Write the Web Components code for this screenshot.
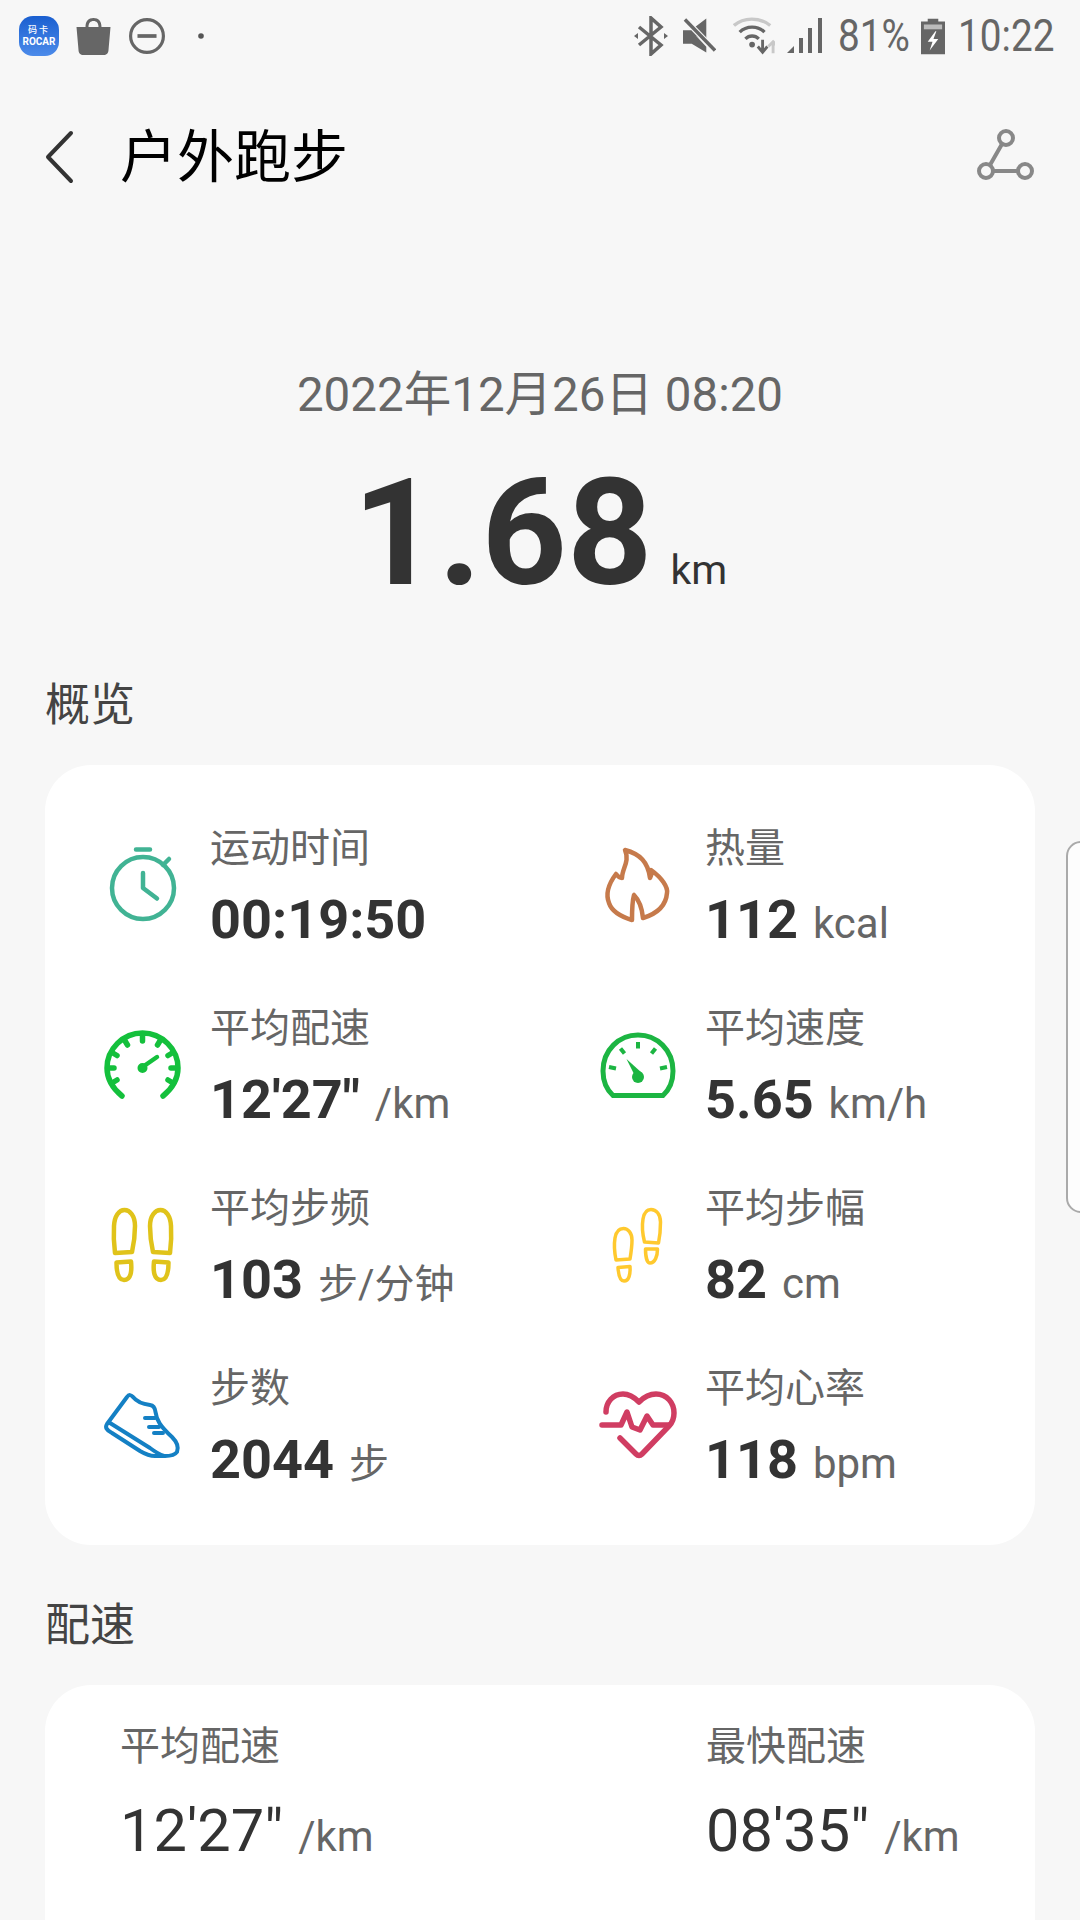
<!DOCTYPE html>
<html lang="zh">
<head>
<meta charset="utf-8">
<title>户外跑步</title>
<style>
  html, body { margin: 0; background: #f7f7f7; }
  body {
    width: 1080px;
    height: 1920px;
    overflow: hidden;
    position: relative;
    font-family: Roboto, "Noto Sans CJK SC", sans-serif;
  }
</style>
</head>
<body>
<status-bar></status-bar>
<app-header title="户外跑步"></app-header>
<run-summary date="2022年12月26日 08:20" distance="1.68" unit="km"></run-summary>

<section-title>概览</section-title>
<metric-card>
  <metric-item label="运动时间" value="00:19:50">
    <svg slot="icon" viewBox="101 846 84 84" fill="none" stroke="#41b394" stroke-width="4.5" stroke-linecap="round" stroke-linejoin="round">
      <circle cx="143" cy="888" r="31"/>
      <path d="M136 849.500h14M163 865l6-6M143 873v15l14 10.500"/>
    </svg>
  </metric-item>
  <metric-item label="热量" value="112" unit="kcal">
    <svg slot="icon" viewBox="595 846 84 84" fill="none" stroke="#c67a4b" stroke-width="4.500" stroke-linejoin="round">
      <path d="M625 850C640 854 648 862 650 878C652 874 652 872 651 870C662 878 668 887 667 893C666 906 656 914 643 918C642 908 639 900 634 895C632 902 632 912 632 920C622 917 612 912 609 903C605 893 610 882 616 874C619 878 621 878 622 878C622 868 630 862 625 850Z"/>
    </svg>
  </metric-item>
  <metric-item label="平均配速" value="12'27&quot;" unit="/km">
    <svg slot="icon" viewBox="101 1026 84 84" fill="none" stroke="#14c03c" stroke-width="5.500" stroke-linecap="round" stroke-linejoin="round">
      <path d="M122 1096C111 1087 107 1078 107 1068C107 1049 123 1033 142.500 1033C162 1033 178 1049 178 1068C178 1078 174 1087 163 1096"/>
      <path d="M142.500 1035v6M124.500 1040l3 5M112 1052.500l5 3M108 1068h6M177 1068h-6M173 1052.500l-5 3M160.500 1040l-3 5M112 1083l5-3M173 1083l-5-3"/>
      <path d="M144 1066l13-9" stroke-width="4.500"/>
      <circle cx="142.500" cy="1068" r="4" fill="#14c03c" stroke-width="2"/>
    </svg>
  </metric-item>
  <metric-item label="平均速度" value="5.65" unit="km/h">
    <svg slot="icon" viewBox="595 1026 84 84" fill="none" stroke="#1cb542" stroke-width="5">
      <path d="M613 1095.500C606 1089 603 1080 603 1071C603 1050 619 1035 638 1035C657 1035 673 1050 673 1071C673 1080 670 1089 663 1095.500Z"/>
      <path d="M638 1042v6.500M620.500 1048.500l4 5M609 1067l7 1.500M667 1067l-7 1.500M655.500 1048.500l-4 5" stroke-width="4"/>
      <path d="M626.500 1059L634 1074L642 1073Z" fill="#1cb542" stroke="none"/>
      <circle cx="638" cy="1077" r="6" fill="#1cb542" stroke="none"/>
    </svg>
  </metric-item>
  <metric-item label="平均步频" value="103" unit="步/分钟">
    <svg slot="icon" viewBox="101 1206 84 84" fill="none" stroke="#e0c31a" stroke-width="4.500" stroke-linejoin="round">
      <path d="M115 1253C113.500 1241 113.500 1234 114 1226C114.500 1216 119 1210 124.500 1210C130 1210 135 1216 135 1226C135 1234 134 1243 132 1252Z"/>
      <path d="M116.500 1262.500L131 1261.500C132 1271 131 1280 124 1280C118 1280 116.500 1272 116.500 1262.500Z"/>
      <g transform="translate(285 0) scale(-1 1)">
        <path d="M115 1253C113.500 1241 113.500 1234 114 1226C114.500 1216 119 1210 124.500 1210C130 1210 135 1216 135 1226C135 1234 134 1243 132 1252Z"/>
        <path d="M116.500 1262.500L131 1261.500C132 1271 131 1280 124 1280C118 1280 116.500 1272 116.500 1262.500Z"/>
      </g>
    </svg>
  </metric-item>
  <metric-item label="平均步幅" value="82" unit="cm">
    <svg slot="icon" viewBox="595 1206 84 84" fill="none" stroke="#ffc92e" stroke-width="3.500" stroke-linejoin="round">
      <path d="M616 1260C614 1250 614 1244 615 1238C616 1232 619 1228.500 623.500 1228.500C628 1228.500 632 1233 632 1240C632 1247 631 1253 630 1259Z"/>
      <path d="M618 1267.500L630 1266.500C630.500 1274 629 1281 624 1281C620 1281 618.500 1275 618 1267.500Z"/>
      <path d="M644.500 1242C642 1232 642 1225 643 1219C644 1213 647 1209.500 651 1209.500C656 1209.500 660.500 1214 660.500 1222C660.500 1229 660 1236 658.500 1243Z"/>
      <path d="M645.500 1249L657.500 1249C657.500 1256 655 1263 650 1263C647 1263 645.500 1256 645.500 1249Z"/>
    </svg>
  </metric-item>
  <metric-item label="步数" value="2044" unit="步">
    <svg slot="icon" viewBox="101 1386 84 84" fill="none" stroke="#1480c4" stroke-width="4" stroke-linecap="round" stroke-linejoin="round">
      <path d="M107 1424L127 1397C129 1394 131 1395 133 1397C137 1402 142 1404 150 1405C154 1405.500 155 1408 155.500 1412C156.500 1420 160 1426 172 1437C177 1442 179 1447 177 1452C175 1455 171 1456 165 1456L155 1456C149 1456 145 1454 140 1451L112 1433C106 1430 105 1427 107 1424Z"/>
      <path d="M110 1423L150 1448C154 1451 158 1454 164 1456"/>
      <path d="M145 1418h10M149 1427h10M154 1433h9"/>
    </svg>
  </metric-item>
  <metric-item label="平均心率" value="118" unit="bpm">
    <svg slot="icon" viewBox="595 1386 84 84" fill="none" stroke="#d03d62" stroke-width="5.500" stroke-linecap="round" stroke-linejoin="round">
      <path d="M606 1412C606 1402 613 1394 623 1394C630 1394 635 1398 639 1402C643 1398 648 1394 656 1394C667 1394 674 1403 674 1413C674 1419 672 1423 669 1426L642 1454C640 1456 638 1456 636 1454L620 1438"/>
      <path d="M602 1425H621L627 1412L632 1427L640 1430L647 1416L653 1425H669"/>
    </svg>
  </metric-item>
</metric-card>

<section-title>配速</section-title>
<pace-card>
  <pace-stat label="平均配速" value="12'27&quot;" unit="/km"></pace-stat>
  <pace-stat label="最快配速" value="08'35&quot;" unit="/km"></pace-stat>
</pace-card>

<edge-handle></edge-handle>

<script>
const FONT = 'Roboto, "Noto Sans CJK SC", sans-serif';

class StatusBar extends HTMLElement {
  constructor() {
    super();
    this.attachShadow({ mode: 'open' }).innerHTML = `
      <style>
      :host { display: flex; align-items: center; height: 72px; box-sizing: border-box; padding: 0 25px 0 19px; color: #666; font-family: ${FONT}; }
      svg { display: block; flex: none; }
      .app {
        width: 40px; height: 40px; border-radius: 14px; margin-top: -1px; flex: none;
        background: linear-gradient(#1a5fd0, #4c8bea);
        color: #fff; display: flex; flex-direction: column; align-items: center; justify-content: center;
        line-height: 12px;
      }
      .app b { font-size: 9px; font-weight: 500; letter-spacing: 2px; }
      .app i { font-size: 10px; font-style: normal; font-weight: 700; }
      .spacer { flex: 1; }
      .text { flex: none; font-size: 44px; line-height: 72px; white-space: nowrap; }
      .text span { display: inline-block; transform: scaleX(.88); transform-origin: left center; }
      </style>
      <div class="app"><b>码卡</b><i>ROCAR</i></div>
      <svg style="margin-left:17px" width="35" height="39" viewBox="0 0 34 39"><path d="M9 10C9 4 12 1 17 1C22 1 25 4 25 10H34L32 33C32 36 30 38 27 38H7C4 38 2 36 2 33L0 10ZM12 10H22C22 6 20 4 17 4C14 4 12 6 12 10Z" fill="#666" fill-rule="evenodd"/></svg>
      <svg style="margin-left:18px" width="36" height="36" viewBox="0 0 34 34" fill="none" stroke="#666" stroke-width="3"><circle cx="17" cy="17" r="15.500"/><path d="M8 17h18" stroke-width="3.500"/></svg>
      <svg style="margin-left:33px" width="6" height="6" viewBox="0 0 6 6"><circle cx="3" cy="3" r="2.800" fill="#555"/></svg>
      <div class="spacer"></div>
      <svg width="34" height="40" viewBox="0 0 34 40" fill="none" stroke="#666" stroke-width="3.500"><path d="M5 11L27 29L17 38V2L27 11L5 29"/><path d="M0 20l4-3v6zM34 20l-4-3v6z" fill="#666" stroke="none"/></svg>
      <svg style="margin-left:15px" width="33" height="38" viewBox="0 0 34 38"><path d="M0 13H8L24 1V26L8 15H0Z M0 14H9L24 30V36L9 27H0Z" fill="#666"/><path d="M2 2L33 34" stroke="#f7f7f7" stroke-width="6"/><path d="M2 2L33 34" stroke="#666" stroke-width="3.500"/></svg>
      <svg style="margin-left:17px" width="42" height="40" viewBox="0 0 44 40" fill="none" stroke="#666" stroke-width="3.500"><path d="M1 9C11 0 28 0 39 9" stroke="#c8c8c8"/><path d="M7 16C14 9 26 9 33 16M13 23C17 19 23 19 27 23"/><circle cx="20" cy="29" r="3" fill="#666" stroke="none"/><path d="M31 24v12M26 31l5 6 5-6" stroke-width="3"/><path d="M42 38V27M37 31l5-5 5 5" stroke="#c8c8c8" stroke-width="3"/></svg>
      <svg style="margin-left:12px" width="36" height="38" viewBox="0 0 36 38" fill="#666"><path d="M0 36L7 29V36Z"/><rect x="12" y="21" width="4" height="15"/><rect x="21" y="11" width="4" height="25"/><rect x="31" y="1" width="4" height="35"/></svg>
      <div class="text" style="margin-left:15px;width:70px"><span>81%</span></div>
      <svg style="margin-left:13px" width="24" height="37" viewBox="0 0 25 37"><path d="M7 0H18V3H25V37H0V3H7Z" fill="#666"/><rect x="3" y="6" width="19" height="5" fill="#bbb"/><path d="M15 13L7 24H12L9 33L18 21H13L16 13Z" fill="#fff"/></svg>
      <div class="text" style="margin-left:13px;width:97px"><span>10:22</span></div>
    `;
  }
}

class AppHeader extends HTMLElement {
  constructor() {
    super();
    this.attachShadow({ mode: 'open' }).innerHTML = `
      <style>
      :host { display: flex; align-items: center; height: 170px; box-sizing: border-box; padding: 0 44px 0 45px; }
      h1 { margin: 0 0 0 46px; flex: 1; font: 400 57px/1 ${FONT}; color: #000; }
      svg { display: block; }
      </style>
      <svg width="29" height="54" viewBox="0 0 29 54" fill="none" stroke="#333" stroke-width="4" stroke-linecap="round" stroke-linejoin="round"><path d="M26 3L3 27L26 51"/></svg>
      <h1>${this.getAttribute('title')}</h1>
      <svg style="margin-top:-2px" width="60" height="54" viewBox="0 0 60 54" fill="none" stroke="#888" stroke-width="4"><circle cx="30" cy="9" r="7"/><circle cx="10" cy="42" r="7"/><circle cx="49" cy="42" r="7"/><path d="M26 15L14 36M17 42H42"/></svg>
    `;
  }
}

class RunSummary extends HTMLElement {
  constructor() {
    super();
    const g = (n) => this.getAttribute(n);
    this.attachShadow({ mode: 'open' }).innerHTML = `
      <style>
      :host { display: block; padding: 125px 0 9px; text-align: center; font-family: ${FONT}; }
      .date { font-size: 47.5px; line-height: 56px; color: #666; }
      .big { display: flex; justify-content: center; align-items: baseline; height: 166px; margin-top: 27px; color: #333; }
      .num { font-size: 149px; font-weight: 700; line-height: 166px; }
      .unit { font-size: 41px; margin-left: 18px; }
      </style>
      <div class="date">${g('date')}</div>
      <div class="big"><span class="num">${g('distance')}</span><span class="unit">${g('unit')}</span></div>
    `;
  }
}

class SectionTitle extends HTMLElement {
  constructor() {
    super();
    this.attachShadow({ mode: 'open' }).innerHTML = `
      <style>
      :host { display: block; margin: 51px 0 0 45px; font: 400 45px/60px ${FONT}; color: #444; }
      </style>
      <slot></slot>
    `;
  }
}

class MetricCard extends HTMLElement {
  constructor() {
    super();
    this.attachShadow({ mode: 'open' }).innerHTML = `
      <style>
      :host {
        display: grid; grid-template-columns: 494px 1fr; grid-auto-rows: 180px;
        box-sizing: border-box; width: 990px; height: 780px; margin: 29px 0 0 45px;
        padding: 55px 0 0 56px; background: #fff; border-radius: 46px;
      }
      </style>
      <slot></slot>
    `;
  }
}

class MetricItem extends HTMLElement {
  constructor() {
    super();
    const g = (n) => this.getAttribute(n);
    const unit = g('unit');
    // CJK units are set a little smaller than the latin ones
    const unitSize = /[^\x00-\x7f]/.test(unit || '') ? 40 : 42;
    this.attachShadow({ mode: 'open' }).innerHTML = `
      <style>
      :host { display: flex; align-items: flex-start; font-family: ${FONT}; }
      .icon { width: 84px; height: 84px; margin: 26px 26px 0 0; flex: none; }
      ::slotted(svg) { display: block; width: 84px; height: 84px; }
      .text { margin-left: -1px; }
      :host(:nth-of-type(even)) .text { margin-left: 0; }
      .label { font-size: 40px; line-height: 58px; color: #666; }
      .row { display: flex; align-items: baseline; height: 70px; line-height: 70px; margin-top: 7px; white-space: nowrap; }
      .val { font-size: 54px; font-weight: 700; color: #333; }
      .unit { font-size: ${unitSize}px; color: #666; margin-left: 15px; }
      </style>
      <div class="icon"><slot name="icon"></slot></div>
      <div class="text">
        <div class="label">${g('label')}</div>
        <div class="row"><span class="val">${g('value')}</span>${unit ? `<span class="unit">${unit}</span>` : ''}</div>
      </div>
    `;
  }
}

class PaceCard extends HTMLElement {
  constructor() {
    super();
    this.attachShadow({ mode: 'open' }).innerHTML = `
      <style>
      :host {
        display: grid; grid-template-columns: 586px 1fr;
        box-sizing: border-box; width: 990px; height: 235px; margin: 29px 0 0 45px;
        padding: 32px 0 0 75px; background: #fff; border-radius: 46px 46px 0 0;
      }
      </style>
      <slot></slot>
    `;
  }
}

class PaceStat extends HTMLElement {
  constructor() {
    super();
    const g = (n) => this.getAttribute(n);
    this.attachShadow({ mode: 'open' }).innerHTML = `
      <style>
      :host { display: block; font-family: ${FONT}; }
      .label { font-size: 40px; line-height: 60px; color: #666; }
      .row { display: flex; align-items: baseline; margin-top: 12px; line-height: 84px; white-space: nowrap; }
      .val { font-size: 59.5px; color: #333; }
      .unit { font-size: 42px; color: #666; margin-left: 15px; }
      </style>
      <div class="label">${g('label')}</div>
      <div class="row"><span class="val">${g('value')}</span><span class="unit">${g('unit')}</span></div>
    `;
  }
}

class EdgeHandle extends HTMLElement {
  constructor() {
    super();
    this.attachShadow({ mode: 'open' }).innerHTML = `
      <style>
      :host {
        position: absolute; left: 1066px; top: 841px; width: 30px; height: 372px; box-sizing: border-box;
        background: #fdfdfd; border: 2px solid #aaa; border-radius: 20px;
      }
      </style>
    `;
  }
}

customElements.define('status-bar', StatusBar);
customElements.define('app-header', AppHeader);
customElements.define('run-summary', RunSummary);
customElements.define('section-title', SectionTitle);
customElements.define('metric-card', MetricCard);
customElements.define('metric-item', MetricItem);
customElements.define('pace-card', PaceCard);
customElements.define('pace-stat', PaceStat);
customElements.define('edge-handle', EdgeHandle);
</script>
</body>
</html>
